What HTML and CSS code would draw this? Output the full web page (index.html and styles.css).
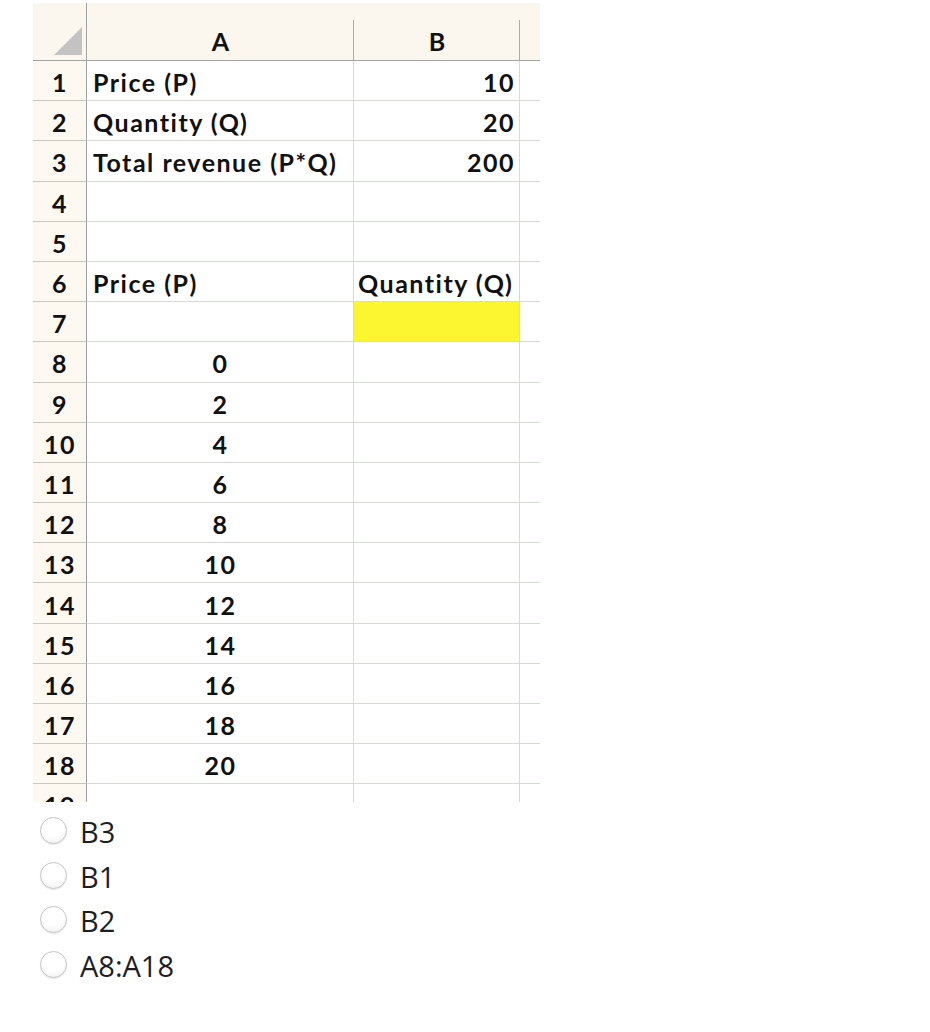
FILE: index.html
```html
<!DOCTYPE html>
<html>
<head>
<meta charset="utf-8">
<link rel="stylesheet" href="styles.css">
</head>
<body>
<div class="page">
  <div class="sheet">
    <div class="hd corner"><svg class="tri" width="30" height="30" viewBox="0 0 30 30"><polygon points="1,29 29,1 29,29" fill="#c3c3c3"/></svg></div>
    <div class="hd col">A</div>
    <div class="hd col">B</div>
    <div class="hd col last"></div>

    <div class="rn">1</div><div class="c l">Price (P)</div><div class="c r">10</div><div class="c x"></div>
    <div class="rn">2</div><div class="c l">Quantity (Q)</div><div class="c r">20</div><div class="c x"></div>
    <div class="rn">3</div><div class="c l">Total revenue (P*Q)</div><div class="c r">200</div><div class="c x"></div>
    <div class="rn">4</div><div class="c l"></div><div class="c r"></div><div class="c x"></div>
    <div class="rn">5</div><div class="c l"></div><div class="c r"></div><div class="c x"></div>
    <div class="rn">6</div><div class="c l">Price (P)</div><div class="c l2">Quantity (Q)</div><div class="c x"></div>
    <div class="rn">7</div><div class="c l"></div><div class="c yellow"></div><div class="c x"></div>
    <div class="rn">8</div><div class="c m">0</div><div class="c"></div><div class="c x"></div>
    <div class="rn">9</div><div class="c m">2</div><div class="c"></div><div class="c x"></div>
    <div class="rn">10</div><div class="c m">4</div><div class="c"></div><div class="c x"></div>
    <div class="rn">11</div><div class="c m">6</div><div class="c"></div><div class="c x"></div>
    <div class="rn">12</div><div class="c m">8</div><div class="c"></div><div class="c x"></div>
    <div class="rn">13</div><div class="c m">10</div><div class="c"></div><div class="c x"></div>
    <div class="rn">14</div><div class="c m">12</div><div class="c"></div><div class="c x"></div>
    <div class="rn">15</div><div class="c m">14</div><div class="c"></div><div class="c x"></div>
    <div class="rn">16</div><div class="c m">16</div><div class="c"></div><div class="c x"></div>
    <div class="rn">17</div><div class="c m">18</div><div class="c"></div><div class="c x"></div>
    <div class="rn">18</div><div class="c m">20</div><div class="c"></div><div class="c x"></div>
    <div class="rn">19</div><div class="c"></div><div class="c"></div><div class="c x"></div>
  </div>

  <div class="options">
    <label class="opt"><input type="radio" name="q" class="radio"><span>B3</span></label>
    <label class="opt"><input type="radio" name="q" class="radio"><span>B1</span></label>
    <label class="opt"><input type="radio" name="q" class="radio"><span>B2</span></label>
    <label class="opt"><input type="radio" name="q" class="radio"><span>A8:A18</span></label>
  </div>
</div>
</body>
</html>
```

FILE: styles.css
```css
html, body {
  margin: 0;
  padding: 0;
  background: #ffffff;
}

.page {
  padding: 3px 0 0 33px;
}

.sheet {
  display: grid;
  grid-template-columns: 54px 267px 166px 20px;
  grid-template-rows: 58px repeat(19, 40.2px);
  width: 507px;
  height: 799px;
  overflow: hidden;
  font-family: "Lato", "Liberation Sans", sans-serif;
  font-weight: 700;
  font-size: 25px;
  letter-spacing: 1.5px;
  color: #111111;
  background: #ffffff;
}

.sheet > div {
  box-sizing: border-box;
  display: flex;
  align-items: center;
  min-width: 0;
  white-space: nowrap;
  overflow: hidden;
  line-height: 1;
}

.hd {
  background-color: #fbf7ee;
  border-bottom: 1px solid #a3a3a3;
  background-image: linear-gradient(to right, transparent calc(100% - 1px), #ababab 0);
  background-repeat: no-repeat;
  background-position: right bottom;
  background-size: 100% 40px;
  align-items: flex-end !important;
  justify-content: center;
  padding-bottom: 6px;
  letter-spacing: 0;
}

.hd.last {
  background-image: none;
}

.corner {
  justify-content: flex-end !important;
  padding: 0 3px 4px 0;
  background-image: none !important;
  border-right: 1px solid #a3a3a3;
}

.tri {
  display: block;
}

.rn {
  background: #fdf8f0;
  border-right: 1px solid #a0a0a0;
  border-bottom: 1px solid #c9c7c2;
  justify-content: center;
  padding-top: 4px;
  padding-left: 1px;
}

.c {
  border-right: 1px solid #d3dbd3;
  border-bottom: 1px solid #d3dbd3;
  padding-top: 4px;
}

.c.x {
  border-right: none;
}

.l {
  padding-left: 6px;
}

.l2 {
  padding-left: 4px;
}

.r {
  justify-content: flex-end;
  padding-right: 4px;
}

.m {
  justify-content: center;
  padding-left: 1px;
}

.yellow {
  background: #fcf630;
}

.options {
  margin-top: 8px;
  margin-left: 7px;
  font-family: "Open Sans", "Noto Sans", sans-serif;
  font-size: 29px;
  color: #1e1e1e;
}

.opt {
  display: flex;
  align-items: flex-start;
  height: 44.5px;
  line-height: 44.5px;
}

.radio {
  appearance: none;
  -webkit-appearance: none;
  box-sizing: border-box;
  width: 27px;
  height: 27px;
  margin: 7px 13px 0 0;
  border: 1px solid #c4c4c4;
  border-radius: 50%;
  background: radial-gradient(circle at 50% 30%, #ffffff 50%, #ececec 100%);
  box-shadow: 0 1px 1px rgba(0, 0, 0, 0.1);
  flex: none;
}
```
